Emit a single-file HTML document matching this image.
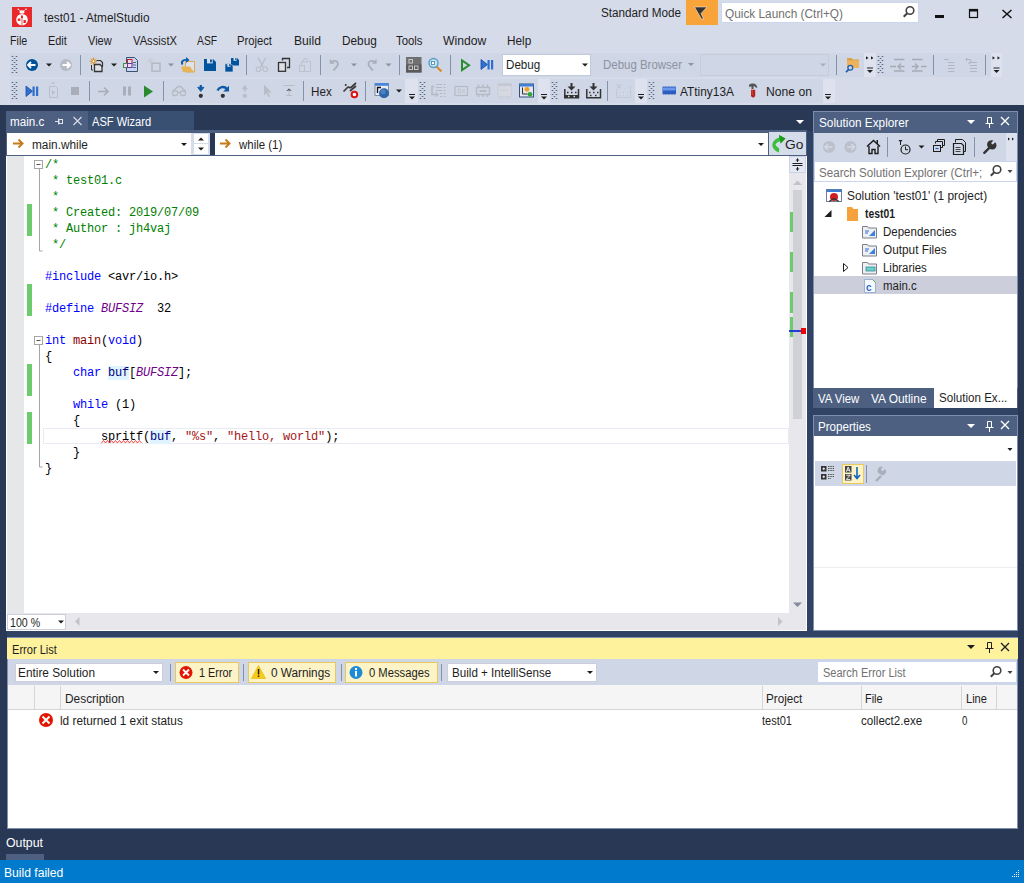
<!DOCTYPE html>
<html><head><meta charset="utf-8">
<style>
*{margin:0;padding:0;box-sizing:border-box}
html,body{width:1024px;height:883px;overflow:hidden;background:#D6DBE9;font-family:"Liberation Sans",sans-serif;font-size:12px;color:#1E1E1E}
.a{position:absolute}
.t{position:absolute;white-space:nowrap;line-height:16px;font-size:12px}
.ov{position:absolute;left:0;top:0}
.code{position:absolute;left:45px;top:157px;font-family:"Liberation Mono",monospace;font-size:12px;line-height:16px;letter-spacing:-0.2px;white-space:pre;color:#000}
.cm{color:#008000}.kw{color:#0000FF}.mac{color:#6F008A;font-style:italic}.fn{color:#880000}.st{color:#A31515}.vr{color:#000080}
</style></head><body>
<div class="a" style="left:12px;top:7px;width:20px;height:20px;background:#E9282B;"></div>
<div class="t" style="left:44.00px;top:10px;;transform:scaleX(0.9827);transform-origin:0 0">test01 - AtmelStudio</div>
<div class="t" style="left:600.60px;top:5px;;transform:scaleX(0.9760);transform-origin:0 0">Standard Mode</div>
<div class="a" style="left:686px;top:0px;width:32px;height:25px;background:#F9A43A;"></div>
<div class="a" style="left:721px;top:2px;width:198px;height:21px;background:#fff;border:1px solid #CCD5F0"></div>
<div class="t" style="left:725.20px;top:6px;color:#717171;transform:scaleX(0.9857);transform-origin:0 0">Quick Launch (Ctrl+Q)</div>
<div class="t" style="left:10.40px;top:33px;;transform:scaleX(0.8900);transform-origin:0 0">File</div>
<div class="t" style="left:48.40px;top:33px;;transform:scaleX(0.9089);transform-origin:0 0">Edit</div>
<div class="t" style="left:88.00px;top:33px;;transform:scaleX(0.9186);transform-origin:0 0">View</div>
<div class="t" style="left:133.00px;top:33px;;transform:scaleX(0.9338);transform-origin:0 0">VAssistX</div>
<div class="t" style="left:197.00px;top:33px;;transform:scaleX(0.8606);transform-origin:0 0">ASF</div>
<div class="t" style="left:237.40px;top:33px;;transform:scaleX(0.9365);transform-origin:0 0">Project</div>
<div class="t" style="left:294.20px;top:33px;;transform:scaleX(1.0112);transform-origin:0 0">Build</div>
<div class="t" style="left:341.50px;top:33px;;transform:scaleX(0.9859);transform-origin:0 0">Debug</div>
<div class="t" style="left:396.20px;top:33px;;transform:scaleX(0.9460);transform-origin:0 0">Tools</div>
<div class="t" style="left:442.70px;top:33px;;transform:scaleX(1.0160);transform-origin:0 0">Window</div>
<div class="t" style="left:507.00px;top:33px;;transform:scaleX(0.9838);transform-origin:0 0">Help</div>
<div class="a" style="left:10px;top:53px;width:854px;height:24px;background:#CFD6E5;"></div>
<div class="a" style="left:864px;top:53px;width:12px;height:24px;background:#DDE2EE;"></div>
<div class="a" style="left:876px;top:53px;width:115px;height:24px;background:#CFD6E5;"></div>
<div class="a" style="left:991px;top:53px;width:11px;height:24px;background:#DDE2EE;"></div>
<div class="a" style="left:10px;top:79px;width:395px;height:24px;background:#CFD6E5;"></div>
<div class="a" style="left:405px;top:79px;width:13px;height:24px;background:#DDE2EE;"></div>
<div class="a" style="left:418px;top:79px;width:120px;height:24px;background:#CFD6E5;"></div>
<div class="a" style="left:538px;top:79px;width:12px;height:24px;background:#DDE2EE;"></div>
<div class="a" style="left:550px;top:79px;width:85px;height:24px;background:#CFD6E5;"></div>
<div class="a" style="left:635px;top:79px;width:12px;height:24px;background:#DDE2EE;"></div>
<div class="a" style="left:647px;top:79px;width:176px;height:24px;background:#CFD6E5;"></div>
<div class="a" style="left:823px;top:79px;width:12px;height:24px;background:#DDE2EE;"></div>
<div class="a" style="left:502px;top:54px;width:89px;height:22px;background:#fff;border:1px solid #C3CADB"></div>
<div class="t" style="left:506.00px;top:57px;;transform:scaleX(0.9686);transform-origin:0 0">Debug</div>
<div class="t" style="left:603.00px;top:57px;color:#8D939F;transform:scaleX(0.9552);transform-origin:0 0">Debug Browser</div>
<div class="a" style="left:700px;top:54px;width:129px;height:22px;background:transparent;border:1px solid #C7CCDA"></div>
<div class="t" style="left:310.80px;top:84px;;transform:scaleX(0.9700);transform-origin:0 0">Hex</div>
<div class="t" style="left:680.40px;top:84px;;transform:scaleX(0.9896);transform-origin:0 0">ATtiny13A</div>
<div class="t" style="left:765.50px;top:84px;;transform:scaleX(1.0113);transform-origin:0 0">None on</div>
<div class="a" style="left:0px;top:105px;width:1024px;height:755px;background:#293955;"></div>
<div class="a" style="left:807px;top:131px;width:6px;height:500px;background:#314364;"></div>
<div class="a" style="left:7px;top:631px;width:1011px;height:6px;background:#314364;"></div>
<div class="a" style="left:813px;top:408px;width:205px;height:7px;background:#314364;"></div>
<div class="a" style="left:6px;top:111px;width:82px;height:19px;background:#4D6082;"></div>
<div class="a" style="left:88px;top:111px;width:106px;height:19px;background:#3A5073;"></div>
<div class="t" style="left:10.40px;top:114px;color:#fff;transform:scaleX(0.9705);transform-origin:0 0">main.c</div>
<div class="t" style="left:92.00px;top:114px;color:#fff;transform:scaleX(0.9237);transform-origin:0 0">ASF Wizard</div>
<div class="a" style="left:6px;top:130px;width:801px;height:26px;background:#4D6082;"></div>
<div class="a" style="left:7px;top:133px;width:184px;height:22px;background:#fff;"></div>
<div class="a" style="left:191px;top:133px;width:19px;height:22px;background:#D5DCEA;"></div>
<div class="a" style="left:194px;top:134px;width:14px;height:8.5px;background:#fff;"></div>
<div class="a" style="left:194px;top:144px;width:14px;height:10px;background:#fff;"></div>
<div class="a" style="left:210px;top:133px;width:5px;height:22px;background:#293955;"></div>
<div class="a" style="left:215px;top:133px;width:553px;height:22px;background:#fff;"></div>
<div class="a" style="left:769px;top:132px;width:37px;height:23px;background:#D5DCEA;"></div>
<div class="t" style="left:31.50px;top:137px;;transform:scaleX(0.9857);transform-origin:0 0">main.while</div>
<div class="t" style="left:238.95px;top:137px;;transform:scaleX(0.9536);transform-origin:0 0">while (1)</div>
<div class="t" style="left:784.80px;top:137px;font-size:13px;transform:scaleX(1.0577);transform-origin:0 0">Go</div>
<div class="a" style="left:6px;top:156px;width:801px;height:475px;background:#fff;"></div>
<div class="a" style="left:7px;top:156px;width:17px;height:457px;background:#E6E7E8;"></div>
<div class="a" style="left:43px;top:428px;width:746px;height:16px;background:transparent;border:1px solid #EAEAF2"></div>
<div class="a" style="left:27px;top:204px;width:5px;height:32px;background:#6CCB6C;"></div>
<div class="a" style="left:27px;top:284px;width:5px;height:32px;background:#6CCB6C;"></div>
<div class="a" style="left:27px;top:364px;width:5px;height:32px;background:#6CCB6C;"></div>
<div class="a" style="left:27px;top:412px;width:5px;height:32px;background:#6CCB6C;"></div>
<div class="a" style="left:789px;top:156px;width:17px;height:474px;background:#E8E8EC;"></div>
<div class="a" style="left:789px;top:156px;width:17px;height:17px;background:#E3E8F4;border:1px solid #CCD3E3"></div>
<div class="a" style="left:793px;top:190px;width:9px;height:229px;background:#D0D1D7;"></div>
<div class="a" style="left:790px;top:212px;width:3px;height:20px;background:#6CCB6C;"></div>
<div class="a" style="left:790px;top:252px;width:3px;height:20px;background:#6CCB6C;"></div>
<div class="a" style="left:790px;top:292px;width:3px;height:21px;background:#6CCB6C;"></div>
<div class="a" style="left:790px;top:317px;width:3px;height:20px;background:#6CCB6C;"></div>
<div class="a" style="left:789px;top:330px;width:12px;height:2px;background:#1F3FD0;"></div>
<div class="a" style="left:801px;top:328px;width:5px;height:6px;background:#F00000;"></div>
<div class="a" style="left:7px;top:613px;width:782px;height:17px;background:#E8E8EC;"></div>
<div class="a" style="left:7px;top:614px;width:59px;height:16px;background:#fff;border:1px solid #CCCEDB"></div>
<div class="t" style="left:10.00px;top:615px;font-size:12px;transform:scaleX(0.8878);transform-origin:0 0">100 %</div>
<div class="a" style="left:813px;top:111px;width:205px;height:298px;background:#fff;border:1px solid #7D8DAE"></div>
<div class="a" style="left:814px;top:112px;width:203px;height:21px;background:#4D6082;"></div>
<div class="t" style="left:818.50px;top:115px;color:#fff;transform:scaleX(0.9815);transform-origin:0 0">Solution Explorer</div>
<div class="a" style="left:814px;top:133px;width:203px;height:28px;background:#CFD6E5;"></div>
<div class="a" style="left:1006px;top:133px;width:11px;height:28px;background:#DDE2EE;"></div>
<div class="a" style="left:814px;top:161px;width:203px;height:21px;background:#fff;border:1px solid #CCD5F0"></div>
<div class="t" style="left:819.30px;top:165px;color:#717171;transform:scaleX(0.9660);transform-origin:0 0">Search Solution Explorer (Ctrl+;</div>
<div class="a" style="left:814px;top:276px;width:203px;height:18px;background:#CCCEDB;"></div>
<div class="t" style="left:847.30px;top:188px;;transform:scaleX(0.9913);transform-origin:0 0">Solution 'test01' (1 project)</div>
<div class="t" style="left:865.40px;top:206px;font-weight:bold;transform:scaleX(0.8625);transform-origin:0 0">test01</div>
<div class="t" style="left:883.40px;top:224px;;transform:scaleX(0.9593);transform-origin:0 0">Dependencies</div>
<div class="t" style="left:883.40px;top:242px;;transform:scaleX(0.9831);transform-origin:0 0">Output Files</div>
<div class="t" style="left:883.40px;top:260px;;transform:scaleX(0.9518);transform-origin:0 0">Libraries</div>
<div class="t" style="left:883.40px;top:278px;;transform:scaleX(0.9563);transform-origin:0 0">main.c</div>
<div class="a" style="left:813px;top:388px;width:205px;height:20px;background:#4D6082;"></div>
<div class="a" style="left:813px;top:408px;width:205px;height:7px;background:#314364;"></div>
<div class="a" style="left:934px;top:388px;width:83px;height:20px;background:#fff;"></div>
<div class="t" style="left:818.30px;top:391px;color:#fff;transform:scaleX(0.9467);transform-origin:0 0">VA View</div>
<div class="t" style="left:871.20px;top:391px;color:#fff;transform:scaleX(0.9947);transform-origin:0 0">VA Outline</div>
<div class="t" style="left:939.00px;top:390px;;transform:scaleX(0.9663);transform-origin:0 0">Solution Ex...</div>
<div class="a" style="left:813px;top:415px;width:205px;height:216px;background:#fff;border:1px solid #7D8DAE"></div>
<div class="a" style="left:814px;top:416px;width:203px;height:20px;background:#4D6082;"></div>
<div class="t" style="left:818.30px;top:419px;color:#fff;transform:scaleX(0.9672);transform-origin:0 0">Properties</div>
<div class="a" style="left:815px;top:461px;width:201px;height:25px;background:#CFD6E5;"></div>
<div class="a" style="left:842px;top:464px;width:22px;height:20px;background:#FCF3C6;border:1px solid #E8C860"></div>
<div class="a" style="left:814px;top:567px;width:203px;height:1px;background:#EEEEF2;"></div>
<div class="a" style="left:7px;top:637px;width:1011px;height:192px;background:#fff;border:1px solid #8090B0"></div>
<div class="a" style="left:7px;top:638px;width:1011px;height:21px;background:#FFF29D;"></div>
<div class="t" style="left:11.60px;top:642px;;transform:scaleX(0.9222);transform-origin:0 0">Error List</div>
<div class="a" style="left:8px;top:659px;width:1009px;height:26px;background:#CFD6E5;"></div>
<div class="a" style="left:15px;top:663px;width:148px;height:19px;background:#fff;border:1px solid #CCCEDB"></div>
<div class="t" style="left:18.30px;top:665px;;transform:scaleX(0.9861);transform-origin:0 0">Entire Solution</div>
<div class="a" style="left:175px;top:662px;width:64px;height:21px;background:#FCF3C6;border:1px solid #E8C860"></div>
<div class="t" style="left:198.50px;top:665px;;transform:scaleX(0.9052);transform-origin:0 0">1 Error</div>
<div class="a" style="left:248px;top:662px;width:88px;height:21px;background:#FCF3C6;border:1px solid #E8C860"></div>
<div class="t" style="left:270.60px;top:665px;;transform:scaleX(0.9810);transform-origin:0 0">0 Warnings</div>
<div class="a" style="left:345px;top:662px;width:93px;height:21px;background:#FCF3C6;border:1px solid #E8C860"></div>
<div class="t" style="left:368.60px;top:665px;;transform:scaleX(0.9351);transform-origin:0 0">0 Messages</div>
<div class="a" style="left:447px;top:663px;width:150px;height:19px;background:#fff;border:1px solid #CCCEDB"></div>
<div class="t" style="left:452.00px;top:665px;;transform:scaleX(0.9686);transform-origin:0 0">Build + IntelliSense</div>
<div class="a" style="left:817px;top:661px;width:200px;height:22px;background:#fff;border:1px solid #CCD5F0"></div>
<div class="t" style="left:822.80px;top:665px;color:#717171;transform:scaleX(0.9174);transform-origin:0 0">Search Error List</div>
<div class="a" style="left:8px;top:685px;width:1009px;height:25px;background:#F5F5F5;border-bottom:1px solid #D5D5D5"></div>
<div class="a" style="left:34px;top:686px;width:1px;height:23px;background:#D5D5D5;"></div>
<div class="a" style="left:60px;top:686px;width:1px;height:23px;background:#D5D5D5;"></div>
<div class="a" style="left:762px;top:686px;width:1px;height:23px;background:#D5D5D5;"></div>
<div class="a" style="left:861px;top:686px;width:1px;height:23px;background:#D5D5D5;"></div>
<div class="a" style="left:961px;top:686px;width:1px;height:23px;background:#D5D5D5;"></div>
<div class="a" style="left:996px;top:686px;width:1px;height:23px;background:#D5D5D5;"></div>
<div class="t" style="left:64.70px;top:691px;;transform:scaleX(0.9907);transform-origin:0 0">Description</div>
<div class="t" style="left:765.70px;top:691px;;transform:scaleX(0.9707);transform-origin:0 0">Project</div>
<div class="t" style="left:865.40px;top:691px;;transform:scaleX(0.9053);transform-origin:0 0">File</div>
<div class="t" style="left:965.50px;top:691px;;transform:scaleX(0.9212);transform-origin:0 0">Line</div>
<div class="t" style="left:59.80px;top:713px;;transform:scaleX(0.9845);transform-origin:0 0">ld returned 1 exit status</div>
<div class="t" style="left:761.60px;top:713px;;transform:scaleX(0.9177);transform-origin:0 0">test01</div>
<div class="t" style="left:861.40px;top:713px;;transform:scaleX(0.9655);transform-origin:0 0">collect2.exe</div>
<div class="t" style="left:961.50px;top:713px;;transform:scaleX(0.8143);transform-origin:0 0">0</div>
<div class="t" style="left:6.25px;top:835px;color:#fff;transform:scaleX(1.0262);transform-origin:0 0">Output</div>
<div class="a" style="left:6px;top:854px;width:38px;height:6px;background:#4D6082;"></div>
<div class="a" style="left:0px;top:860px;width:1024px;height:23px;background:#007ACC;"></div>
<div class="t" style="left:4.30px;top:865px;color:#fff;transform:scaleX(1.0098);transform-origin:0 0">Build failed</div>
<svg class="ov" width="1024" height="883" viewBox="0 0 1024 883">
<g fill="#fff">
<circle cx="22" cy="19.7" r="5.8"/>
<ellipse cx="22" cy="12" rx="2.6" ry="1.7"/>
<circle cx="18.3" cy="9.3" r="0.8"/><circle cx="26" cy="9.3" r="0.8"/>
</g>
<path d="M19 10l2 1.5M25 10l-2 1.5" stroke="#fff" stroke-width="0.6"/>
<g fill="#E9282B"><rect x="21" y="15.5" width="2" height="2.5"/><rect x="17.8" y="18.5" width="2.6" height="2.4"/><rect x="23.5" y="20" width="2.4" height="3"/><rect x="21.6" y="18" width="0.8" height="8"/></g>
<path d="M694.5 7h12.5l-6 6.5l2.5 5.5h-2z" fill="#333" stroke="#fff" stroke-width="0.5"/>
<circle cx="910" cy="10.5" r="3.8" fill="none" stroke="#424242" stroke-width="1.6"/><path d="M907.2 13.3l-3.5 3.5" stroke="#424242" stroke-width="2"/>
<rect x="935" y="15" width="9" height="3" fill="#111"/>
<rect x="969.5" y="9.5" width="8" height="8" fill="none" stroke="#111" stroke-width="1.2"/><rect x="969" y="9" width="9" height="2.5" fill="#111"/>
<path d="M1002.5 10l9 8M1011.5 10l-9 8" stroke="#111" stroke-width="1.5"/>
<rect x="11.7" y="56" width="1.6" height="1" fill="#5A6680"/><rect x="15.7" y="56" width="1.6" height="1" fill="#5A6680"/>
<rect x="13.7" y="58" width="1.6" height="1" fill="#5A6680"/>
<rect x="11.7" y="60" width="1.6" height="1" fill="#5A6680"/><rect x="15.7" y="60" width="1.6" height="1" fill="#5A6680"/>
<rect x="13.7" y="62" width="1.6" height="1" fill="#5A6680"/>
<rect x="11.7" y="64" width="1.6" height="1" fill="#5A6680"/><rect x="15.7" y="64" width="1.6" height="1" fill="#5A6680"/>
<rect x="13.7" y="66" width="1.6" height="1" fill="#5A6680"/>
<rect x="11.7" y="68" width="1.6" height="1" fill="#5A6680"/><rect x="15.7" y="68" width="1.6" height="1" fill="#5A6680"/>
<rect x="13.7" y="70" width="1.6" height="1" fill="#5A6680"/>
<rect x="11.7" y="72" width="1.6" height="1" fill="#5A6680"/><rect x="15.7" y="72" width="1.6" height="1" fill="#5A6680"/>
<rect x="11.7" y="82" width="1.6" height="1" fill="#5A6680"/><rect x="15.7" y="82" width="1.6" height="1" fill="#5A6680"/>
<rect x="13.7" y="84" width="1.6" height="1" fill="#5A6680"/>
<rect x="11.7" y="86" width="1.6" height="1" fill="#5A6680"/><rect x="15.7" y="86" width="1.6" height="1" fill="#5A6680"/>
<rect x="13.7" y="88" width="1.6" height="1" fill="#5A6680"/>
<rect x="11.7" y="90" width="1.6" height="1" fill="#5A6680"/><rect x="15.7" y="90" width="1.6" height="1" fill="#5A6680"/>
<rect x="13.7" y="92" width="1.6" height="1" fill="#5A6680"/>
<rect x="11.7" y="94" width="1.6" height="1" fill="#5A6680"/><rect x="15.7" y="94" width="1.6" height="1" fill="#5A6680"/>
<rect x="13.7" y="96" width="1.6" height="1" fill="#5A6680"/>
<rect x="11.7" y="98" width="1.6" height="1" fill="#5A6680"/><rect x="15.7" y="98" width="1.6" height="1" fill="#5A6680"/>
<rect x="877.7" y="56" width="1.6" height="1" fill="#5A6680"/><rect x="881.7" y="56" width="1.6" height="1" fill="#5A6680"/>
<rect x="879.7" y="58" width="1.6" height="1" fill="#5A6680"/>
<rect x="877.7" y="60" width="1.6" height="1" fill="#5A6680"/><rect x="881.7" y="60" width="1.6" height="1" fill="#5A6680"/>
<rect x="879.7" y="62" width="1.6" height="1" fill="#5A6680"/>
<rect x="877.7" y="64" width="1.6" height="1" fill="#5A6680"/><rect x="881.7" y="64" width="1.6" height="1" fill="#5A6680"/>
<rect x="879.7" y="66" width="1.6" height="1" fill="#5A6680"/>
<rect x="877.7" y="68" width="1.6" height="1" fill="#5A6680"/><rect x="881.7" y="68" width="1.6" height="1" fill="#5A6680"/>
<rect x="879.7" y="70" width="1.6" height="1" fill="#5A6680"/>
<rect x="877.7" y="72" width="1.6" height="1" fill="#5A6680"/><rect x="881.7" y="72" width="1.6" height="1" fill="#5A6680"/>
<rect x="419.7" y="82" width="1.6" height="1" fill="#5A6680"/><rect x="423.7" y="82" width="1.6" height="1" fill="#5A6680"/>
<rect x="421.7" y="84" width="1.6" height="1" fill="#5A6680"/>
<rect x="419.7" y="86" width="1.6" height="1" fill="#5A6680"/><rect x="423.7" y="86" width="1.6" height="1" fill="#5A6680"/>
<rect x="421.7" y="88" width="1.6" height="1" fill="#5A6680"/>
<rect x="419.7" y="90" width="1.6" height="1" fill="#5A6680"/><rect x="423.7" y="90" width="1.6" height="1" fill="#5A6680"/>
<rect x="421.7" y="92" width="1.6" height="1" fill="#5A6680"/>
<rect x="419.7" y="94" width="1.6" height="1" fill="#5A6680"/><rect x="423.7" y="94" width="1.6" height="1" fill="#5A6680"/>
<rect x="421.7" y="96" width="1.6" height="1" fill="#5A6680"/>
<rect x="419.7" y="98" width="1.6" height="1" fill="#5A6680"/><rect x="423.7" y="98" width="1.6" height="1" fill="#5A6680"/>
<rect x="551.7" y="82" width="1.6" height="1" fill="#5A6680"/><rect x="555.7" y="82" width="1.6" height="1" fill="#5A6680"/>
<rect x="553.7" y="84" width="1.6" height="1" fill="#5A6680"/>
<rect x="551.7" y="86" width="1.6" height="1" fill="#5A6680"/><rect x="555.7" y="86" width="1.6" height="1" fill="#5A6680"/>
<rect x="553.7" y="88" width="1.6" height="1" fill="#5A6680"/>
<rect x="551.7" y="90" width="1.6" height="1" fill="#5A6680"/><rect x="555.7" y="90" width="1.6" height="1" fill="#5A6680"/>
<rect x="553.7" y="92" width="1.6" height="1" fill="#5A6680"/>
<rect x="551.7" y="94" width="1.6" height="1" fill="#5A6680"/><rect x="555.7" y="94" width="1.6" height="1" fill="#5A6680"/>
<rect x="553.7" y="96" width="1.6" height="1" fill="#5A6680"/>
<rect x="551.7" y="98" width="1.6" height="1" fill="#5A6680"/><rect x="555.7" y="98" width="1.6" height="1" fill="#5A6680"/>
<rect x="648.7" y="82" width="1.6" height="1" fill="#5A6680"/><rect x="652.7" y="82" width="1.6" height="1" fill="#5A6680"/>
<rect x="650.7" y="84" width="1.6" height="1" fill="#5A6680"/>
<rect x="648.7" y="86" width="1.6" height="1" fill="#5A6680"/><rect x="652.7" y="86" width="1.6" height="1" fill="#5A6680"/>
<rect x="650.7" y="88" width="1.6" height="1" fill="#5A6680"/>
<rect x="648.7" y="90" width="1.6" height="1" fill="#5A6680"/><rect x="652.7" y="90" width="1.6" height="1" fill="#5A6680"/>
<rect x="650.7" y="92" width="1.6" height="1" fill="#5A6680"/>
<rect x="648.7" y="94" width="1.6" height="1" fill="#5A6680"/><rect x="652.7" y="94" width="1.6" height="1" fill="#5A6680"/>
<rect x="650.7" y="96" width="1.6" height="1" fill="#5A6680"/>
<rect x="648.7" y="98" width="1.6" height="1" fill="#5A6680"/><rect x="652.7" y="98" width="1.6" height="1" fill="#5A6680"/>
<circle cx="32" cy="65" r="6" fill="#00529B"/><path d="M28.5 65h7M31 62l-3 3l3 3" stroke="#fff" stroke-width="1.8" fill="none"/>
<path d="M46.0 63.5h6l-3.0 3z" fill="#1E1E1E"/>
<circle cx="66" cy="65" r="6" fill="#B5BAC4"/><path d="M62.5 65h7M67 62l3 3l-3 3" stroke="#fff" stroke-width="1.8" fill="none"/>
<rect x="80" y="55" width="1" height="20" fill="#8591A8"/>
<path d="M96.5 60.5h4l2 2v4.5" fill="none" stroke="#333" stroke-width="1.2"/><path d="M94.5 64.5h5.5l2 2v5h-7.5z" fill="#E0E2EA" stroke="#333" stroke-width="1.3"/><path d="M91.5 65v5h1.5" fill="none" stroke="#333" stroke-width="1"/>
<path d="M93.4 57.5v7.5M89.7 61.25h7.5M90.8 58.6l5.2 5.2M96 58.6l-5.2 5.2" stroke="#D88A1A" stroke-width="1"/><circle cx="93.4" cy="61.25" r="1.3" fill="#fff" stroke="#D88A1A" stroke-width="0.8"/>
<path d="M111.0 63.5h6l-3.0 3z" fill="#1E1E1E"/>
<path d="M126.5 57.5h8l3 3v11h-11z" fill="#C7D5F0" stroke="#3D4F72" stroke-width="1"/><path d="M133 62.5h3M133 65h3M133 67.5h3" stroke="#3D4F72" stroke-width="0.8"/>
<rect x="127.5" y="59.5" width="4.5" height="4" fill="#F4D8EC" stroke="#C42026" stroke-width="1"/><rect x="123.5" y="63.5" width="4" height="4" fill="#F4D8EC" stroke="#3F8F3F" stroke-width="1"/><rect x="127.5" y="63.5" width="4.5" height="4" fill="#F4D8EC" stroke="#5B3F9E" stroke-width="1"/>
<rect x="152" y="63.2" width="8" height="8" fill="none" stroke="#B5BAC4" stroke-width="1.6"/><path d="M150.5 57.8v6M147.5 60.8h6M148.4 58.7l4.2 4.2M152.6 58.7l-4.2 4.2" stroke="#C8CCD5" stroke-width="0.9"/>
<path d="M168.0 63.5h6l-3.0 3z" fill="#8D939F"/>
<path d="M185.5 61.5h9v10.5h-9z" fill="#DEE2EC" stroke="#E0A850" stroke-width="1"/><path d="M181 66.5h9l4 5.5h-11z" fill="#E8B45A"/>
<path d="M182.5 64.5c-2-3 1-5 4.5-4.5" stroke="#0E5CA8" stroke-width="1.9" fill="none"/><path d="M186 57l3.5 3l-3.5 3z" fill="#0E5CA8"/>
<path d="M204 59h9l3 3v9h-12z" fill="#00539C"/><rect x="207" y="59" width="5.7" height="4.4" fill="#D6DCEA"/><rect x="210" y="59.5" width="1.8" height="2.8" fill="#00539C"/>
<path d="M231 58h6l2 2v5.6h-8z" fill="#00539C"/><rect x="233.5" y="58" width="3.2" height="2.8" fill="#D6DCEA"/><rect x="235.2" y="58.3" width="1.2" height="1.8" fill="#00539C"/>
<path d="M225 63.8h6l2 2v6.1h-8z" fill="#00539C" stroke="#D6DCEA" stroke-width="0.6"/><rect x="227.3" y="64" width="3.2" height="2.8" fill="#D6DCEA"/><rect x="229" y="64.3" width="1.2" height="1.8" fill="#00539C"/>
<rect x="246" y="55" width="1" height="20" fill="#8591A8"/>
<circle cx="258.5" cy="69.3" r="2.4" fill="none" stroke="#B5BAC4" stroke-width="1"/><circle cx="265.3" cy="69.3" r="2.4" fill="none" stroke="#B5BAC4" stroke-width="1"/><path d="M258.3 58l4.8 9M265.5 58l-4.8 9" stroke="#B5BAC4" stroke-width="1.1"/>
<path d="M282.5 60.5v-2h7v9h-2.5" fill="none" stroke="#333" stroke-width="1.3"/><rect x="278.5" y="62.5" width="7" height="8.8" fill="#DCDDE6" stroke="#333" stroke-width="1.3"/>
<path d="M303 61.5h-1.5v4M305 71.5h5.5v-10h-1.5" fill="none" stroke="#BDC1CB" stroke-width="1"/><path d="M303.5 62v-1.5a2 2 0 0 1 4 0v1.5z" fill="none" stroke="#BDC1CB" stroke-width="1"/><rect x="299.5" y="65.5" width="5" height="6" fill="none" stroke="#BDC1CB" stroke-width="1"/>
<rect x="320" y="55" width="1" height="20" fill="#8591A8"/>
<path d="M332 61.5c2.5-1.5 6-0.5 6 2.5c0 2-2 3.5-4.5 6.5" fill="none" stroke="#A9AEB9" stroke-width="1.8"/><path d="M329.8 59v4.8h5z" fill="#A9AEB9"/>
<path d="M351.0 63.5h6l-3.0 3z" fill="#8D939F"/>
<path d="M374.4 61.5c-2.5-1.5-6-0.5-6 2.5c0 2 2 3.5 4.5 6.5" fill="none" stroke="#A9AEB9" stroke-width="1.8"/><path d="M376.6 59v4.8h-5z" fill="#A9AEB9"/>
<path d="M385.5 63.5h6l-3.0 3z" fill="#8D939F"/>
<rect x="399" y="55" width="1" height="20" fill="#8591A8"/>
<rect x="406" y="57" width="15.5" height="15.5" fill="#707070"/><rect x="406" y="64.5" width="15.5" height="8" fill="#5A5A5A"/><rect x="409" y="59.5" width="3.5" height="3.5" fill="none" stroke="#C8C8C8" stroke-width="1"/><rect x="409" y="66" width="3.5" height="3.5" fill="none" stroke="#C8C8C8" stroke-width="1"/><rect x="414.5" y="66" width="3.5" height="3.5" fill="none" stroke="#C8C8C8" stroke-width="1"/>
<path d="M436.5 66.5l5 5" stroke="#D98B2B" stroke-width="2.2"/><circle cx="433.5" cy="63" r="4.5" fill="#BFE6F5" stroke="#5C9CC4" stroke-width="1.4"/><rect x="431.5" y="61.5" width="3" height="3" fill="#fff" stroke="#4A7FA6" stroke-width="0.8"/>
<rect x="450" y="55" width="1" height="20" fill="#8591A8"/>
<path d="M462 60.5v9.5l7-4.75z" fill="none" stroke="#2E8B30" stroke-width="2"/>
<path d="M481 59.5v10l6.5-5z" fill="#2F6FD0" stroke="#1A4EA8" stroke-width="0.8"/><rect x="487.5" y="60" width="2.2" height="9.5" fill="#2F6FD0"/><rect x="491" y="60" width="2.2" height="9.5" fill="#2F6FD0"/>
<path d="M582.0 63.5h6l-3.0 3z" fill="#1E1E1E"/>
<path d="M688.0 63.0h6l-3.0 3z" fill="#8D939F"/>
<path d="M820.0 63.5h6l-3.0 3z" fill="#A9AEB9"/>
<rect x="836" y="55" width="1" height="20" fill="#8591A8"/>
<path d="M847 58h4.5l1.5 1.5h6v8.5h-12z" fill="#DDA04A"/><rect x="847" y="60.5" width="12" height="7.5" fill="#EFB25C"/><circle cx="850.3" cy="67.8" r="2.4" fill="#D0D6E5" stroke="#1F5FAF" stroke-width="1.3"/><path d="M848.6 69.6l-2.6 2.6" stroke="#1F5FAF" stroke-width="1.8"/>
<path d="M866 56.3l2.5 1.6l-2.5 1.6z M871 56.3l2.5 1.6l-2.5 1.6z" fill="#1E1E1E"/>
<rect x="867" y="67.5" width="6" height="1" fill="#1E1E1E"/><path d="M867 70.0h6l-3 3z" fill="#1E1E1E"/>
<g stroke="#A5AAB5" stroke-width="1.3"><path d="M894 59.5h10.5M890 66.5h6M899 66.5h5.5M894 71h10.5"/><path d="M901 63.5l-3 3l3 3" fill="none"/></g>
<g stroke="#A5AAB5" stroke-width="1.3"><path d="M912 59.5h10.5M912 66.5h5.5M921 66.5h5.5M912 71h10.5"/><path d="M915 63.5l3 3l-3 3" fill="none"/></g>
<rect x="933" y="55" width="1" height="20" fill="#8591A8"/>
<g stroke="#B0B5C0" stroke-width="1"><path d="M944 59.5h4.5M948 62.5h6.5M948 65.5h6.5M948 68.5h6.5M948 71.5h6.5"/></g>
<g stroke="#B0B5C0" stroke-width="1"><path d="M970 62.5h7M970 65.5h7M970 68.5h7M970 71.5h7"/><path d="M966.5 59.5h3c1.5 0 2 2 0.5 3l-1.5 1.5" fill="none" stroke-width="1.2"/><path d="M966.5 58v3" stroke-width="1.2"/></g>
<rect x="985" y="55" width="1" height="20" fill="#8591A8"/>
<path d="M992.5 56.3l2.5 1.6l-2.5 1.6z M997.5 56.3l2.5 1.6l-2.5 1.6z" fill="#1E1E1E"/>
<rect x="993.5" y="67.5" width="6" height="1" fill="#1E1E1E"/><path d="M993.5 70.0h6l-3 3z" fill="#1E1E1E"/>
<path d="M26 86v10.5l6.5-5.25z" fill="#2F6FD0" stroke="#1A4EA8" stroke-width="0.8"/><rect x="32.5" y="86.5" width="2.2" height="9.5" fill="#2F6FD0"/><rect x="36" y="86.5" width="2.2" height="9.5" fill="#2F6FD0"/>
<path d="M49.5 86.5h6l2 2v9h-8z" fill="none" stroke="#B8BDC7" stroke-width="1"/><path d="M52 90v5l3-2.5z" fill="#B8BDC7"/><path d="M51 82.5h4l-2 2z" fill="#B8BDC7"/>
<rect x="71" y="87" width="8" height="8" fill="#A9AEB9"/>
<rect x="89" y="81" width="1" height="20" fill="#8591A8"/>
<path d="M98 91.5h10M104 87.5l4 4l-4 4" fill="none" stroke="#A9AEB9" stroke-width="1.6"/>
<rect x="123" y="86.5" width="3" height="9" fill="#A9AEB9"/><rect x="128" y="86.5" width="3" height="9" fill="#A9AEB9"/>
<path d="M144 85.5v12l9-6z" fill="#2B8A2E"/>
<rect x="163" y="81" width="1" height="20" fill="#8591A8"/>
<g fill="none" stroke="#B5BAC4" stroke-width="1.3"><path d="M172.5 91.5l5.5-5h2.5l5.5 5"/><rect x="172.5" y="91" width="5" height="4.5" rx="1.5"/><rect x="180.5" y="91" width="5" height="4.5" rx="1.5"/><path d="M177.5 92.5h3"/></g>
<path d="M200.8 85v3.5" stroke="#0F5AA8" stroke-width="2.2"/><path d="M197.6 87.3h6.4l-3.2 4.2z" fill="#0F5AA8" stroke="#0F5AA8" stroke-width="0.8" stroke-linejoin="round"/><circle cx="200.8" cy="95.8" r="2.1" fill="#333"/>
<path d="M217.5 90.5c1.5-3.5 6.5-5 9.5-1.5" fill="none" stroke="#0F5AA8" stroke-width="2.3"/><path d="M229 85.8v5.8h-5.8z" fill="#0F5AA8"/><circle cx="222.8" cy="95.8" r="2.1" fill="#333"/>
<path d="M244.8 91.5v-4" stroke="#B8BDC7" stroke-width="2"/><path d="M241.6 89.2h6.4l-3.2-4.2z" fill="#B8BDC7"/><circle cx="244.8" cy="95.8" r="2.1" fill="#B8BDC7"/>
<path d="M264 84.5v11l2.5-2.5l2 4l1.5-.7-2-4h3.5z" fill="#B8BDC7"/>
<g stroke="#B8BDC7" stroke-width="1"><path d="M283.5 85.5h11M289 88v7M286.5 90.5l2.5-2.5l2.5 2.5M286 95.5h6"/></g>
<rect x="303" y="81" width="1" height="20" fill="#8591A8"/>
<path d="M343.5 91.5l4-4c1-1 2 0.5 3.5 0l5-4.5M345 84.5l1.5 1M350 91l6-5" fill="none" stroke="#3A3A3A" stroke-width="1.7"/><circle cx="354.4" cy="94.5" r="2.8" fill="#fff" stroke="#E01010" stroke-width="2"/><rect x="353.4" y="93.5" width="2" height="2" fill="#fff"/>
<rect x="365" y="81" width="1" height="20" fill="#8591A8"/>
<rect x="375" y="83.5" width="13.5" height="12" fill="#E9ECF2" stroke="#6A7A96" stroke-width="0.8"/><rect x="375" y="83" width="13.5" height="2.8" fill="#4A86D8"/><path d="M381 87.5h-3.5v5.5" fill="none" stroke="#111" stroke-width="1.3"/><circle cx="384" cy="93.3" r="5" fill="#2F66AA"/><circle cx="383" cy="91.8" r="2.5" fill="#4A82C4"/>
<path d="M396.0 89.5h6l-3.0 3z" fill="#1E1E1E"/>
<rect x="409" y="94" width="6" height="1" fill="#1E1E1E"/><path d="M409 96.5h6l-3 3z" fill="#1E1E1E"/>
<g fill="none" stroke="#B5BAC4" stroke-width="1.2"><path d="M436 84.5h6M443.5 84.5h2M436 87.5h6M443.5 87.5h2M436 90.5h6M443.5 90.5h2M440 93.5h2M443.5 93.5h2M440 96.5h2M443.5 96.5h2"/><path d="M434.5 86.5h-2.5v8h4.5" stroke-width="1.5"/><path d="M435.5 92.5l2.5 2l-2.5 2"/></g>
<rect x="455" y="86.5" width="12.5" height="9" fill="none" stroke="#B5BAC4" stroke-width="1.2"/><path d="M458 89h2.5v4h-2.5zM462 89l3 4M465 89l-3 4" fill="none" stroke="#BFC3CC" stroke-width="0.9"/>
<rect x="476.5" y="87.5" width="13" height="7" fill="none" stroke="#B5BAC4" stroke-width="1.4"/><rect x="479.5" y="90" width="7" height="2" fill="#B5BAC4"/><path d="M478.5 84.5v3M483 84.5v3M487.5 84.5v3M478.5 94.5v2.5M483 94.5v2.5M487.5 94.5v2.5" stroke="#B5BAC4" stroke-width="1.4"/>
<rect x="498" y="83.5" width="13.5" height="13" fill="#D5D8E0" stroke="#C8CCD5" stroke-width="0.8"/><rect x="498" y="83.5" width="13.5" height="2.5" fill="#C4C8D0"/><path d="M500 97.5v1.5M503 97.5v1.5M506 97.5v1.5M509 97.5v1.5" stroke="#C4C8D0" stroke-width="1.2"/><path d="M500.5 90.5h1M503.5 90.5h1M506.5 90.5h1" stroke="#BFC3CC" stroke-width="1"/>
<rect x="519.5" y="84" width="14" height="13" fill="#E3E7EF" stroke="#34507E" stroke-width="1"/><rect x="519.5" y="84" width="14" height="2.5" fill="#3F7FD6"/><path d="M522.5 87.5v6.5h5" stroke="#333" stroke-width="1" fill="none"/><circle cx="527" cy="89.3" r="2.4" fill="#EFA025"/><circle cx="530" cy="94.3" r="2.4" fill="#2EA836"/>
<rect x="541" y="94" width="6" height="1" fill="#1E1E1E"/><path d="M541 96.5h6l-3 3z" fill="#1E1E1E"/>
<path d="M571.5 83v5" stroke="#333" stroke-width="2"/><path d="M567.5 86.5h8l-4 4z" fill="#333"/><path d="M564.8 89v8.7h13.7v-8.7" fill="none" stroke="#333" stroke-width="1.5"/><rect x="564" y="95" width="15" height="3" fill="#333"/><path d="M567 92.5h1.5M571 92.5h1.5M575 92.5h1.5" stroke="#333" stroke-width="1.5"/><path d="M568 96.5h1.5M573.5 96.5h1.5" stroke="#D0D6E4" stroke-width="1.3"/>
<path d="M593.5 83v5" stroke="#333" stroke-width="2"/><path d="M589.5 86.5h8l-4 4z" fill="#333"/><path d="M586.8 89v8.7h13.7v-8.7" fill="none" stroke="#333" stroke-width="1.5"/><path d="M589 92.5h1.5M593 92.5h1.5M597 92.5h1.5M590 95.5h1.5M595 95.5h1.5" stroke="#333" stroke-width="1.5"/>
<rect x="607" y="81" width="1" height="20" fill="#8591A8"/>
<path d="M616.5 89v8.5h14v-12" fill="none" stroke="#C4C8D2" stroke-width="1"/><path d="M617 84.5l4 4M621 84.5l-4 4M619 92.5h1M623 92.5h1M627 92.5h1M619 95.5h1M623 95.5h1M627 95.5h1M624 88.5h1M627 86.5h1" stroke="#C4C8D2" stroke-width="1.2"/>
<rect x="638" y="94" width="6" height="1" fill="#1E1E1E"/><path d="M638 96.5h6l-3 3z" fill="#1E1E1E"/>
<rect x="662.5" y="86.5" width="13.5" height="8" rx="1" fill="#2D5BC0"/><rect x="663" y="87.5" width="12.5" height="3" fill="#6A98EC"/><path d="M664 86h1M667 86h1M670 86h1M673 86h1M664 95h1M667 95h1M670 95h1M673 95h1" stroke="#CFD6E5" stroke-width="1.2"/>
<path d="M749 85c1-1.5 5-2 7-0.5l1.5 3l-1.5 0.3l-1.5-1.5l-1 0.2v2.5h-2v-2.5l-2.5 0.2z" fill="#555"/><path d="M751 89.8h4.2v6.5l-2.1 1.5l-2.1-1.5z" fill="#B52020"/><rect x="751.5" y="90" width="1.5" height="5" fill="#D04030"/>
<rect x="825" y="94" width="6" height="1" fill="#1E1E1E"/><path d="M825 96.5h6l-3 3z" fill="#1E1E1E"/>
<path d="M55 121.5h3.5M58.5 118.5v6" fill="none" stroke="#E0E4EC" stroke-width="1"/><rect x="59" y="119.5" width="3.5" height="4" fill="none" stroke="#E0E4EC" stroke-width="1"/>
<path d="M73.5 117l8 8M81.5 117l-8 8" stroke="#D8DDE8" stroke-width="1.1"/>
<path d="M796 120h8l-4 4z" fill="#fff"/>
<path d="M198 140.5h6l-3-3z M198 147.5h6l-3 3z" fill="#1E1E1E"/>
<path d="M13 143.5h9M18.5 139.5l4 4l-4 4" fill="none" stroke="#C57D1B" stroke-width="2"/>
<path d="M220 143.5h9M225.5 139.5l4 4l-4 4" fill="none" stroke="#C57D1B" stroke-width="2"/>
<path d="M181.0 143.0h6l-3.0 3z" fill="#1E1E1E"/>
<path d="M758.0 143.0h6l-3.0 3z" fill="#1E1E1E"/>
<path d="M779 152.5C774 150.5 771.5 147 772.5 143.5C773.5 140 776.5 138.3 779.3 137.8L779 135L785.5 138.6L780.6 143.5L780.3 141.2C778 141.5 776.2 143 775.5 144.8C776.5 146.8 778.2 147.8 779.2 148.3Z" fill="#3DBF3D"/><path d="M780.6 143.5L780.3 141.2L779.3 137.8L779 135L785.5 138.6Z" fill="#1E9A1E"/>
<rect x="34.5" y="160.5" width="8" height="8" fill="#fff" stroke="#A5A5A5" stroke-width="1"/><path d="M36.5 164.5h4" stroke="#555" stroke-width="1"/>
<path d="M39.5 169v82h3" fill="none" stroke="#A5A5A5" stroke-width="1"/>
<rect x="34.5" y="336.5" width="8" height="8" fill="#fff" stroke="#A5A5A5" stroke-width="1"/><path d="M36.5 340.5h4" stroke="#555" stroke-width="1"/>
<path d="M39.5 345v122h3" fill="none" stroke="#A5A5A5" stroke-width="1"/>
<path d="M792.5 163.5h10M792.5 165.5h10M797.5 158.5v3.5M797.5 167v3.5" stroke="#1E1E1E" stroke-width="1"/><path d="M795.5 160.5h4l-2-2z M795.5 168.5h4l-2 2z" fill="#1E1E1E"/>
<path d="M793 185h9l-4.5-4.5z" fill="#C2C3C9"/>
<path d="M793 602.5h9l-4.5 4.5z" fill="#868999"/>
<path d="M58.0 620.5h6l-3.0 3z" fill="#1E1E1E"/>
<path d="M79.5 617v9l-4.5-4.5z" fill="#C2C3C9"/><path d="M778 617v9l4.5-4.5z" fill="#C2C3C9"/>
<path d="M967 120h8l-4 4z" fill="#fff"/>
<path d="M987.5 117.5h4v6h-4zM985.5 123.5h8M989.5 123.5v4.5" stroke="#fff" stroke-width="1" fill="none"/>
<path d="M1001 117l8 8M1009 117l-8 8" stroke="#fff" stroke-width="1.3"/>
<circle cx="829" cy="147" r="6" fill="#BBC0CA"/><path d="M825.5 147h7M828 144l-3 3l3 3" stroke="#D5DAE6" stroke-width="1.6" fill="none"/>
<circle cx="850.5" cy="147" r="6" fill="#BBC0CA"/><path d="M847 147h7M851.5 144l3 3l-3 3" stroke="#D5DAE6" stroke-width="1.6" fill="none"/>
<path d="M867 146.5l6.5-6l6.5 6" fill="none" stroke="#1E1E1E" stroke-width="1.6"/><path d="M869 146v7.5h3v-4h3v4h3v-7.5" fill="none" stroke="#1E1E1E" stroke-width="1.4"/><rect x="876.5" y="140" width="1.5" height="4" fill="#1E1E1E"/>
<rect x="887" y="137" width="1" height="20" fill="#8591A8"/>
<circle cx="905.5" cy="149.5" r="4.5" fill="none" stroke="#1E1E1E" stroke-width="1.2"/><path d="M905.5 146.5v3.2h2.5" stroke="#1E1E1E" stroke-width="1" fill="none"/><path d="M898.5 140h4l-2 2.5z" fill="#1E1E1E"/><path d="M900.5 142v3" stroke="#1E1E1E" stroke-width="1"/>
<path d="M918.5 145.5h6l-3.0 3z" fill="#1E1E1E"/>
<rect x="933.5" y="145.5" width="7" height="6" fill="none" stroke="#1E1E1E" stroke-width="1"/><path d="M935.5 143.5v-2h7v6h-2M937.5 141.5v-2h7v6h-2" fill="none" stroke="#1E1E1E" stroke-width="1"/><path d="M935.5 148.5h3" stroke="#1E5FBF" stroke-width="1.2"/>
<path d="M955.5 142.5v-3h7l3 3v9h-2" fill="none" stroke="#1E1E1E" stroke-width="1"/><path d="M953.5 143.5h8l2 2v9h-10z" fill="none" stroke="#1E1E1E" stroke-width="1.2"/><path d="M955.5 147.5h5M955.5 149.5h5M955.5 151.5h5" stroke="#1E1E1E" stroke-width="0.8"/>
<rect x="974" y="137" width="1" height="20" fill="#8591A8"/>
<path d="M984.3 152.8l6-6" stroke="#333" stroke-width="2.4" stroke-linecap="round"/><path d="M989.5 148.5a3.6 3.6 0 1 0 5.6-6.2l-2.1 2.1l-1.4-0.3l-0.3-1.4l2.1-2.1a3.6 3.6 0 0 0-3.9 7.9z" fill="#333"/>
<path d="M1008 137.5l2 1.5l-2 1.5z M1012 137.5l2 1.5l-2 1.5z" fill="#1E1E1E"/>
<circle cx="997" cy="169.5" r="3.8" fill="none" stroke="#424242" stroke-width="1.6"/><path d="M994.3 172.3l-3.5 3.5" stroke="#424242" stroke-width="2"/>
<path d="M1007.5 170.0h5l-2.5 3z" fill="#424242"/>
<rect x="826.5" y="189.5" width="15" height="12" fill="#fff" stroke="#6E7F99" stroke-width="1"/><rect x="826.5" y="189.5" width="15" height="2.5" fill="#3C7FD0"/><circle cx="834" cy="197" r="4" fill="#D01F1F"/><path d="M829 201.5l5-3l5 3" stroke="#333" stroke-width="1.2" fill="none"/>
<path d="M831.5 210v7h-7z" fill="#1E1E1E"/>
<path d="M847 207h5l1.5 2h4.5v12h-11z" fill="#F6A23A"/>
<path d="M862.5 226.5h5l1 1.5h8v10h-14z" fill="#EEF0F3" stroke="#7A7F88" stroke-width="1"/><path d="M865 231h4M865 233h3" stroke="#2E6AD0" stroke-width="1"/><path d="M869 236l6-6v6z" fill="#3D7FE0"/>
<path d="M862.5 244.5h5l1 1.5h8v10h-14z" fill="#EEF0F3" stroke="#7A7F88" stroke-width="1"/><path d="M865 249h4M865 251h3" stroke="#2E6AD0" stroke-width="1"/><path d="M869 254l6-6v6z" fill="#3D7FE0"/>
<path d="M862.5 262.5h5l1 1.5h8v10h-14z" fill="#EEF0F3" stroke="#7A7F88" stroke-width="1"/><rect x="866" y="267" width="9" height="4" fill="#6ACFCF" stroke="#3E8E8E" stroke-width="0.8"/>
<path d="M843.5 263.5v8l4.5-4z" fill="none" stroke="#1E1E1E" stroke-width="1"/>
<path d="M864.5 279.5h8l3 3v10h-11z" fill="#F4F8FF" stroke="#9DB2CF" stroke-width="1"/><text x="866" y="290.5" font-family="Liberation Sans" font-size="10" font-weight="bold" fill="#2E6AD0">c</text><path d="M872.5 279.5l3 3" stroke="#4CAF50" stroke-width="1"/>
<path d="M967 424h8l-4 4z" fill="#fff"/>
<path d="M987.5 421.5h4v6h-4zM985.5 427.5h8M989.5 427.5v4.5" stroke="#fff" stroke-width="1" fill="none"/>
<path d="M1001 421l8 8M1009 421l-8 8" stroke="#fff" stroke-width="1.3"/>
<path d="M1007.5 448.0h5l-2.5 3z" fill="#1E1E1E"/>
<rect x="821" y="466" width="5.5" height="5.5" fill="#333"/><rect x="821" y="474" width="5.5" height="5.5" fill="#333"/><path d="M822.5 468.75h2.5M823.75 467.5v2.5M822.5 476.75h2.5M823.75 475.5v2.5" stroke="#fff" stroke-width="0.9"/><path d="M828 466.5h6M828 468.5h6M828 470.5h6M828 474.5h6M828 476.5h6M828 478.5h3" stroke="#555" stroke-width="1" stroke-dasharray="1.5 0.8"/>
<rect x="845" y="466" width="6.5" height="6.5" fill="#444"/><rect x="845" y="474" width="6.5" height="6.5" fill="#444"/><path d="M846.3 471.8l1.9-4.8l1.9 4.8M847 470.2h2.4M846.3 475.2h3.9l-3.9 4.2h3.9" fill="none" stroke="#fff" stroke-width="0.9"/><path d="M857 467v11M854 475l3 3.5l3-3.5" fill="none" stroke="#1565C0" stroke-width="1.6"/>
<rect x="866" y="465" width="1" height="18" fill="#8591A8"/>
<path d="M876 481l5-5" stroke="#A9AEB9" stroke-width="2.4"/><path d="M880 474a3.5 3.5 0 1 0 5-5l-2 2l-1.5-.5l-.5-1.5l2-2a3.5 3.5 0 0 0-3 7z" fill="#A9AEB9"/>
<path d="M967 645h8l-4 4z" fill="#1E1E1E"/>
<path d="M987.5 642.5h4v6h-4zM985.5 648.5h8M989.5 648.5v4.5" stroke="#1E1E1E" stroke-width="1" fill="none"/>
<path d="M1001 643l8 8M1009 643l-8 8" stroke="#1E1E1E" stroke-width="1.3"/>
<path d="M153.0 671.0h6l-3.0 3z" fill="#1E1E1E"/>
<rect x="170" y="664" width="1" height="17" fill="#8591A8"/>
<circle cx="186" cy="672.5" r="6.5" fill="#E51400"/><path d="M183 669.5l6 6M189 669.5l-6 6" stroke="#fff" stroke-width="1.8"/>
<rect x="243" y="664" width="1" height="17" fill="#8591A8"/>
<path d="M258.5 665.5l7 13h-14z" fill="#F8CC14" stroke="#E5B000" stroke-width="0.6"/><rect x="257.8" y="669" width="1.5" height="5.5" fill="#1E1E1E"/><rect x="257.8" y="675.5" width="1.5" height="1.5" fill="#1E1E1E"/>
<rect x="341" y="664" width="1" height="17" fill="#8591A8"/>
<circle cx="356" cy="672.5" r="6.5" fill="#1D8BD6"/><rect x="355" y="671" width="2" height="5.5" fill="#fff"/><rect x="355" y="668" width="2" height="2" fill="#fff"/>
<rect x="441" y="664" width="1" height="17" fill="#8591A8"/>
<path d="M587.0 671.0h6l-3.0 3z" fill="#1E1E1E"/>
<circle cx="997" cy="670.5" r="3.8" fill="none" stroke="#424242" stroke-width="1.6"/><path d="M994.3 673.3l-3.5 3.5" stroke="#424242" stroke-width="2"/>
<path d="M1007.5 671.0h5l-2.5 3z" fill="#424242"/>
<circle cx="46" cy="720" r="7" fill="#E51400"/><path d="M42.5 716.5l7 7M49.5 716.5l-7 7" stroke="#fff" stroke-width="2"/>
<g fill="#fff"><rect x="1018" y="870" width="1" height="1"/><rect x="1016" y="872" width="1" height="1"/><rect x="1018" y="872" width="1" height="1"/><rect x="1014" y="874" width="1" height="1"/><rect x="1016" y="874" width="1" height="1"/><rect x="1018" y="874" width="1" height="1"/><rect x="1012" y="876" width="1" height="1"/><rect x="1014" y="876" width="1" height="1"/><rect x="1016" y="876" width="1" height="1"/><rect x="1018" y="876" width="1" height="1"/></g>
</svg>
<div class="code" style="left:45px;top:157px"><span class="cm">/*
 * test01.c
 *
 * Created: 2019/07/09
 * Author : jh4vaj
 */</span>

<span class="kw">#include</span> &lt;avr/io.h&gt;

<span class="kw">#define</span> <span class="mac">BUFSIZ</span>  32

<span class="kw">int</span> <span class="fn">main</span>(<span class="kw">void</span>)
{
    <span class="kw">char</span> <span class="vr" style="background:#E0F4FF">buf</span>[<span class="mac">BUFSIZ</span>];

    <span class="kw">while</span> (1)
    {
        spritf(<span class="vr" style="background:#E0F4FF">buf</span>, <span class="st">"%s"</span>, <span class="st">"hello, world"</span>);
    }
}</div>
<svg class="ov" width="1024" height="883"><path d="M101.5 443 L103.5 440.5 L105.5 443 L107.5 440.5 L109.5 443 L111.5 440.5 L113.5 443 L115.5 440.5 L117.5 443 L119.5 440.5 L121.5 443 L123.5 440.5 L125.5 443 L127.5 440.5 L129.5 443 L131.5 440.5 L133.5 443 L135.5 440.5 L137.5 443 L139.5 440.5 L141.5 443" fill="none" stroke="#FF3030" stroke-width="0.9"/></svg>

</body></html>
